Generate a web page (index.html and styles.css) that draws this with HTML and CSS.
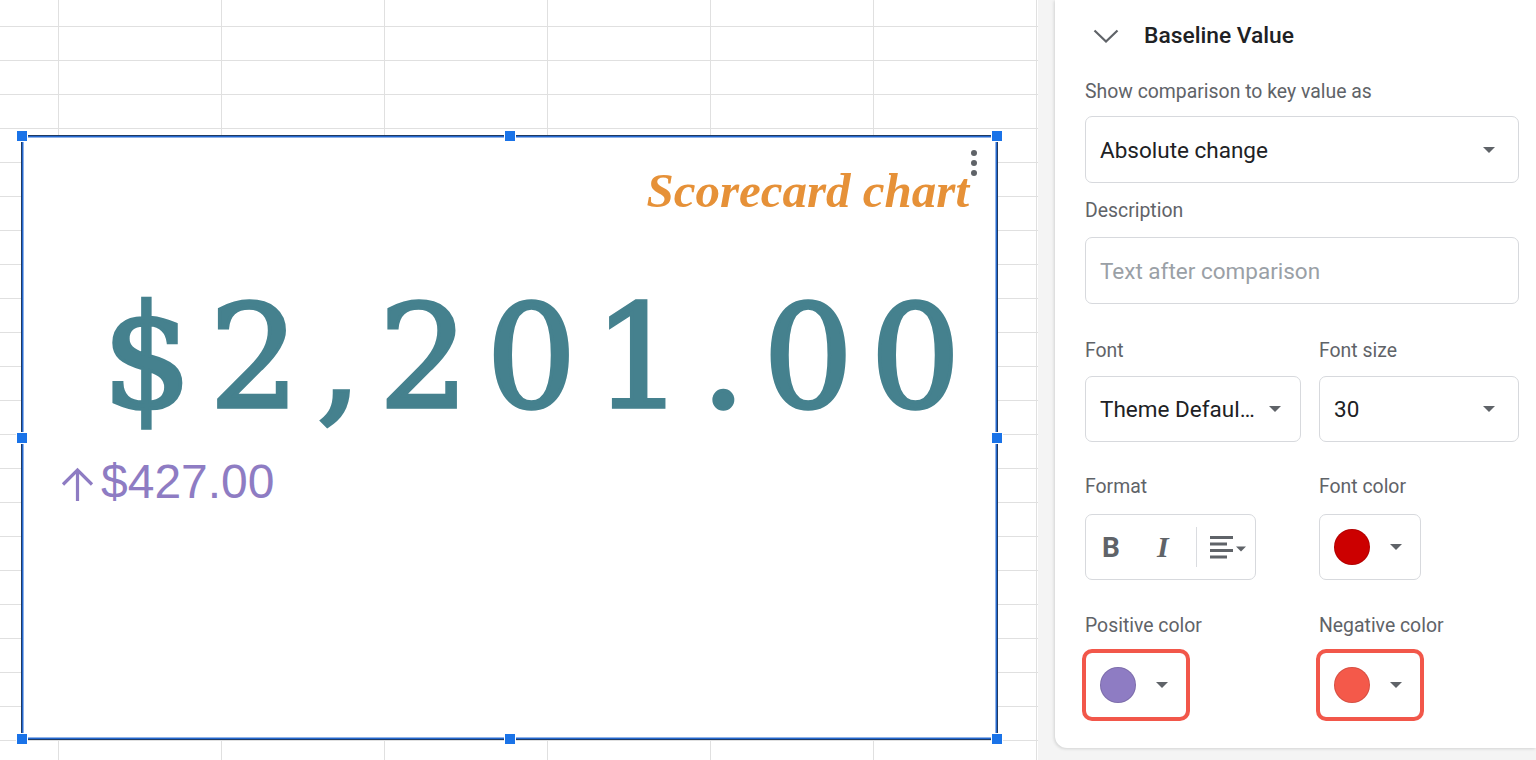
FILE: index.html
```html
<!DOCTYPE html>
<html lang="en">
<head>
<meta charset="utf-8">
<title>Scorecard chart</title>
<link rel="stylesheet" href="styles.css">
</head>
<body>
<div class="app">
  <div class="sheet">
    <div class="chart">
      <div class="chart-menu"><span></span><span></span><span></span></div>
      <div class="chart-title">Scorecard chart</div>
      <div class="key-value">$2,201.00</div>
      <div class="change">
        <svg class="change-arrow" width="33" height="34" viewBox="0 0 33 34"><path d="M16.5 3v31M2 17.5 16.5 3 31 17.5" fill="none" stroke="#8e7cc3" stroke-width="3.2"/></svg>
        <span class="change-text">$427.00</span>
      </div>
      <span class="handle h-tl"></span>
      <span class="handle h-tm"></span>
      <span class="handle h-tr"></span>
      <span class="handle h-ml"></span>
      <span class="handle h-mr"></span>
      <span class="handle h-bl"></span>
      <span class="handle h-bm"></span>
      <span class="handle h-br"></span>
    </div>
  </div>
  <div class="side">
    <div class="panel">
      <div class="section-head">
        <svg class="chev" width="26" height="14" viewBox="0 0 26 14"><path d="M1.5 1.5 13 12.5 24.5 1.5" fill="none" stroke="#5f6368" stroke-width="2.2"/></svg>
        <span>Baseline Value</span>
      </div>

      <div class="label l-compare">Show comparison to key value as</div>
      <div class="select s-compare">
        <span class="select-text">Absolute change</span>
        <svg class="caret" width="12" height="6" viewBox="0 0 12 6"><path d="M0 0h12L6 6z"/></svg>
      </div>

      <div class="label l-desc">Description</div>
      <div class="input"><span class="placeholder">Text after comparison</span></div>

      <div class="pair p-font">
        <div class="field">
          <div class="label">Font</div>
          <div class="select s-font">
            <span class="select-text">Theme Defaul…</span>
            <svg class="caret" width="12" height="6" viewBox="0 0 12 6"><path d="M0 0h12L6 6z"/></svg>
          </div>
        </div>
        <div class="field">
          <div class="label">Font size</div>
          <div class="select s-size">
            <span class="select-text">30</span>
            <svg class="caret" width="12" height="6" viewBox="0 0 12 6"><path d="M0 0h12L6 6z"/></svg>
          </div>
        </div>
      </div>

      <div class="pair p-format">
        <div class="field">
          <div class="label">Format</div>
          <div class="fmt">
            <span class="fmt-b">B</span>
            <span class="fmt-i">I</span>
            <span class="fmt-div"></span>
            <svg class="fmt-align" width="36" height="24" viewBox="0 0 36 24">
              <rect x="0" y="1" width="23" height="3" fill="#5f6368"/>
              <rect x="0" y="7.5" width="17" height="3" fill="#5f6368"/>
              <rect x="0" y="14" width="23" height="3" fill="#5f6368"/>
              <rect x="0" y="20.5" width="17" height="3" fill="#5f6368"/>
              <path d="M26 11.5h10l-5 5z" fill="#5f6368"/>
            </svg>
          </div>
        </div>
        <div class="field">
          <div class="label">Font color</div>
          <div class="swatch-box">
            <span class="swatch sw-red"></span>
            <svg class="caret" width="12" height="6" viewBox="0 0 12 6"><path d="M0 0h12L6 6z"/></svg>
          </div>
        </div>
      </div>

      <div class="pair p-colors">
        <div class="field">
          <div class="label">Positive color</div>
          <div class="swatch-box marked">
            <span class="swatch sw-purple"></span>
            <svg class="caret" width="12" height="6" viewBox="0 0 12 6"><path d="M0 0h12L6 6z"/></svg>
          </div>
        </div>
        <div class="field">
          <div class="label">Negative color</div>
          <div class="swatch-box marked">
            <span class="swatch sw-coral"></span>
            <svg class="caret" width="12" height="6" viewBox="0 0 12 6"><path d="M0 0h12L6 6z"/></svg>
          </div>
        </div>
      </div>
    </div>
  </div>
</div>
</body>
</html>
```

FILE: styles.css
```css
* { box-sizing: border-box; }
html, body { margin: 0; padding: 0; }
body {
  width: 1536px;
  height: 760px;
  overflow: hidden;
  background: #fff;
  font-family: Roboto, "Liberation Sans", sans-serif;
}
.app { display: flex; height: 760px; }

/* spreadsheet canvas */
.sheet {
  position: relative;
  flex: none;
  width: 1038px;
  height: 760px;
  background-color: #fff;
  background-image:
    repeating-linear-gradient(to bottom, transparent 0 26px, #e0e0e0 26px 27px, transparent 27px 34px),
    repeating-linear-gradient(to right, transparent 0 57px, #e0e0e0 57px 58px, transparent 58px 163px);
  background-position: 0 0, 1px 0;
}

/* floating chart object */
.chart {
  position: absolute;
  left: 21px;
  top: 135px;
  width: 977px;
  height: 605px;
  background: #fff;
  border: 1px solid #1f3a62;
  box-shadow: inset 0 0 0 1.5px #2468cf;
  display: flex;
  flex-direction: column;
}
.chart-menu {
  position: absolute;
  right: 20px;
  top: 14px;
  display: flex;
  flex-direction: column;
  gap: 4px;
}
.chart-menu span {
  width: 6px;
  height: 6px;
  border-radius: 50%;
  background: #5f6368;
}
.chart-title {
  margin-top: 30px;
  padding-right: 28px;
  text-align: right;
  font-family: "Liberation Serif", serif;
  font-style: italic;
  font-weight: 700;
  font-size: 49px;
  line-height: 50px;
  color: #e69138;
}
.key-value {
  margin-top: 67px;
  padding-left: 80px;
  font-family: "DejaVu Serif", serif;
  font-weight: 400;
  font-size: 142px;
  line-height: 150px;
  letter-spacing: 17px;
  color: #45818e;
  -webkit-text-stroke: 3.5px #45818e;
  white-space: nowrap;
}
.change {
  margin-top: 25px;
  padding-left: 39px;
  height: 48px;
  display: flex;
  align-items: center;
}
.change-arrow { margin-top: 4px; flex: none; }
.change-text {
  margin-left: 7px;
  font-family: "Liberation Sans", sans-serif;
  font-size: 48px;
  line-height: 48px;
  color: #8e7cc3;
}

/* selection handles */
.handle {
  position: absolute;
  width: 12px;
  height: 12px;
  background: #1a73e8;
  border: 1px solid #fff;
}
.h-tl { left: -6px; top: -6px; }
.h-tm { left: 50%; margin-left: -6px; top: -6px; }
.h-tr { right: -6px; top: -6px; }
.h-ml { left: -6px; top: 50%; margin-top: -6px; }
.h-mr { right: -6px; top: 50%; margin-top: -6px; }
.h-bl { left: -6px; bottom: -6px; }
.h-bm { left: 50%; margin-left: -6px; bottom: -6px; }
.h-br { right: -6px; bottom: -6px; }

/* side panel */
.side {
  flex: 1;
  height: 760px;
  background: #f4f4f4;
  padding-left: 17px;
}
.panel {
  height: 748px;
  background: #fff;
  border-bottom-left-radius: 12px;
  box-shadow: -1px 1px 3px rgba(60, 64, 67, 0.18);
  padding: 24px 17px 0 30px;
}
.section-head {
  display: flex;
  align-items: center;
  height: 24px;
}
.chev { margin-left: 8px; flex: none; }
.section-head span {
  margin-left: 25px;
  font-size: 22.8px;
  font-weight: 500;
  line-height: 24px;
  color: #202124;
}
.label {
  font-size: 19.4px;
  line-height: 22px;
  color: #5f6368;
  white-space: nowrap;
}
.l-compare { margin-top: 33px; }
.l-desc { margin-top: 17px; }

.select, .input {
  height: 67px;
  border: 1px solid #d7d9dd;
  border-radius: 7px;
  display: flex;
  align-items: center;
  justify-content: space-between;
  padding: 0 23px 0 14px;
}
.s-compare { margin-top: 13px; }
.input { margin-top: 15px; }
.select-text {
  font-size: 22.5px;
  color: #202124;
  white-space: nowrap;
}
.placeholder {
  font-size: 22.5px;
  color: #9aa0a6;
}
.caret { fill: #5f6368; flex: none; }

.pair {
  display: grid;
  grid-template-columns: 216px 200px;
  column-gap: 18px;
}
.p-font { margin-top: 36px; }
.p-format { margin-top: 34px; }
.p-colors { margin-top: 35px; }

.p-font .select { margin-top: 14px; height: 66px; }
.s-font { padding-right: 19px; }

.fmt {
  margin-top: 16px;
  width: 171px;
  height: 66px;
  border: 1px solid #d7d9dd;
  border-radius: 7px;
  display: flex;
  align-items: center;
  padding-left: 16px;
}
.fmt-b {
  width: 48px;
  font-family: Roboto, sans-serif;
  font-weight: 700;
  font-size: 28px;
  color: #5f6368;
}
.fmt-i {
  width: 38px;
  padding-left: 7px;
  font-family: "Liberation Serif", serif;
  font-style: italic;
  font-weight: 700;
  font-size: 30px;
  color: #5f6368;
}
.fmt-div {
  width: 1px;
  height: 40px;
  margin-left: 8px;
  background: #dadce0;
}
.fmt-align { margin-left: 13px; flex: none; }

.swatch-box {
  margin-top: 16px;
  width: 102px;
  height: 66px;
  border: 1px solid #d7d9dd;
  border-radius: 7px;
  display: flex;
  align-items: center;
  padding-left: 14px;
}
.p-colors .swatch-box { margin-top: 15px; }
.swatch-box .caret { margin-left: 20px; }
.swatch {
  width: 36px;
  height: 36px;
  border-radius: 50%;
  border: 1px solid rgba(0, 0, 0, 0.12);
  flex: none;
}
.sw-red { background: #cc0000; }
.sw-purple { background: #8e7cc3; }
.sw-coral { background: #f4594a; }
.marked {
  outline: 4px solid #f2574a;
  outline-offset: -1px;
}
```
